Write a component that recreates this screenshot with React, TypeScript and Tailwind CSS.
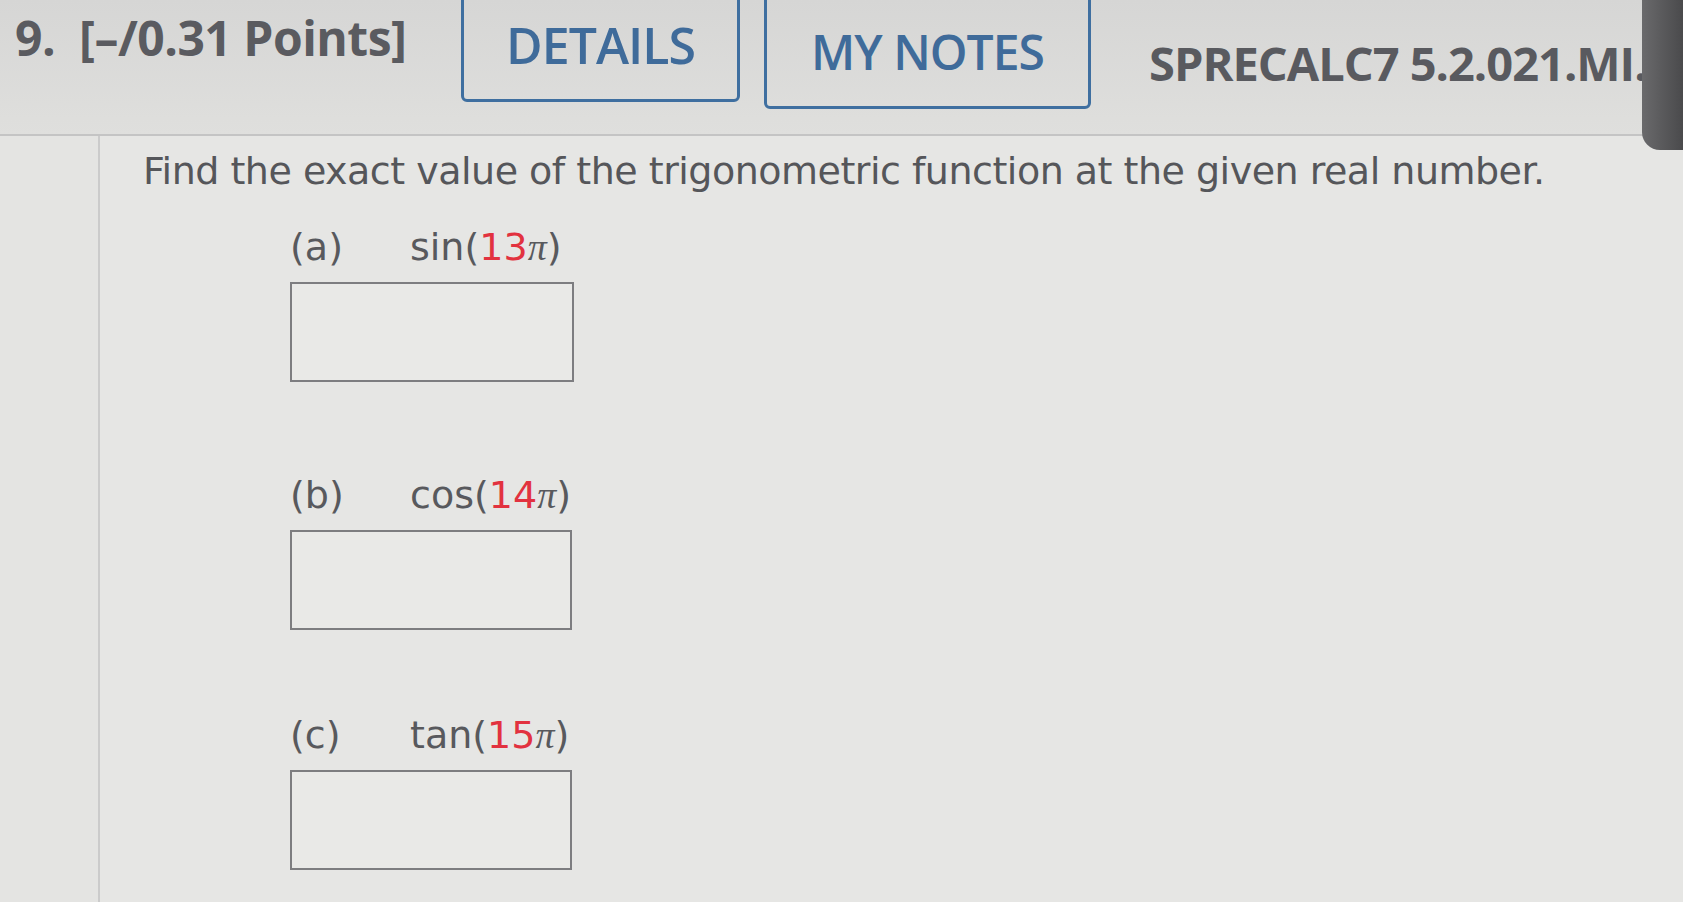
import React from 'react';

const head = { fontFamily: '"Open Sans", "Noto Sans", sans-serif' };
const body = { fontFamily: '"DejaVu Sans", Verdana, sans-serif' };

function Part({ label, fn, n, boxW, className = '' }: { label: string; fn: string; n: string; boxW: string; className?: string }) {
  return (
    <div className={`flex flex-col ${className}`}>
      <div className="flex items-baseline text-[38px] text-[#58595d] leading-none">
        <span className="w-[120px]">({label})</span>
        <span>
          {fn}(<span className="text-[#e2323f]">{n}</span>
          <span className="italic" style={{ fontFamily: '"Liberation Serif", serif' }}>π</span>)
        </span>
      </div>
      <div className={`mt-[16px] h-[100px] border-2 border-[#7d7d80] bg-[#e9e9e7] ${boxW}`} />
    </div>
  );
}

export default function App() {
  return (
    <div className="w-[1683px] h-[902px] overflow-hidden bg-[#e6e6e4] flex flex-col">
      {/* header */}
      <div
        className="h-[136px] flex items-start bg-gradient-to-b from-[#d6d6d5] to-[#dfdfdd] border-b-2 border-[#c4c4c4] shrink-0"
        style={head}
      >
        <div className="ml-[15px] mt-[2px] w-[446px] shrink-0 text-[48px] font-bold text-[#5a5b60] tracking-[-0.5px] whitespace-nowrap">
          9.&nbsp; [–/0.31 Points]
        </div>
        <div className="-mt-[6px] w-[279px] h-[108px] shrink-0 border-[3px] border-[#3f6fa0] rounded-b-md flex items-center justify-center pb-[6px] text-[50px] font-semibold text-[#3f6b9a] tracking-[-1px]">
          DETAILS
        </div>
        <div className="ml-[24px] -mt-[6px] w-[327px] h-[115px] shrink-0 border-[3px] border-[#3f6fa0] rounded-b-md flex items-center justify-center text-[48px] font-semibold text-[#3f6b9a] tracking-[-1px]">
          MY NOTES
        </div>
        <div className="ml-[58px] mt-[28px] flex-1 min-w-0 overflow-hidden whitespace-nowrap text-[47px] font-bold text-[#595a5f] tracking-[-1px]">
          SPRECALC7 5.2.021.MI.
        </div>
        <div className="w-[41px] h-[150px] shrink-0 rounded-bl-[18px] bg-gradient-to-r from-[#6a6a6c] to-[#4a4a4c]" />
      </div>

      {/* body */}
      <div className="flex-1 flex">
        <div className="w-[100px] shrink-0 border-r-2 border-[#cbcbcb] bg-[#e4e4e2]" />
        <div className="flex-1 pl-[43px] pt-[16px]" style={body}>
          <p className="text-[38px] text-[#55565a] leading-none tracking-[-0.5px] whitespace-nowrap">
            Find the exact value of the trigonometric function at the given real number.
          </p>
          <div className="ml-[147px] mt-[38px] flex flex-col">
            <Part label="a" fn="sin" n="13" boxW="w-[284px]" />
            <Part label="b" fn="cos" n="14" boxW="w-[282px]" className="mt-[94px]" />
            <Part label="c" fn="tan" n="15" boxW="w-[282px]" className="mt-[86px]" />
          </div>
        </div>
      </div>
    </div>
  );
}
